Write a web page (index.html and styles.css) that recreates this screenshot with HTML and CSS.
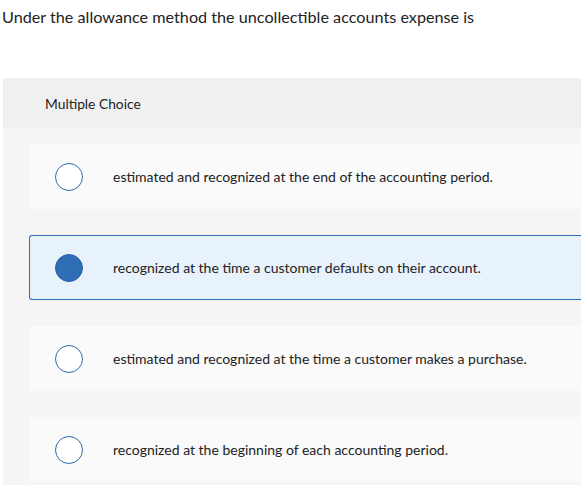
FILE: index.html
```html
<!DOCTYPE html>
<html>
<head>
<meta charset="utf-8">
<link rel="stylesheet" href="styles.css">
</head>
<body>
<p class="question">Under the allowance method the uncollectible accounts expense is</p>
<div class="quiz">
  <div class="quiz-header">Multiple Choice</div>
  <div class="choices">
    <div class="choice">
      <span class="radio"></span>
      <span class="label">estimated and recognized at the end of the accounting period.</span>
    </div>
    <div class="choice selected">
      <span class="radio"></span>
      <span class="label">recognized at the time a customer defaults on their account.</span>
    </div>
    <div class="choice">
      <span class="radio"></span>
      <span class="label">estimated and recognized at the time a customer makes a purchase.</span>
    </div>
    <div class="choice">
      <span class="radio"></span>
      <span class="label">recognized at the beginning of each accounting period.</span>
    </div>
  </div>
</div>
</body>
</html>
```
FILE: styles.css
```css
html, body {
  margin: 0;
  padding: 0;
  background: #ffffff;
}
body {
  font-family: "Lato", "Liberation Sans", sans-serif;
  color: #222222;
  width: 581px;
  height: 485px;
  overflow: hidden;
}
.question {
  margin: 0;
  padding: 8px 0 0 2px;
  font-size: 16.2px;
  line-height: 18px;
  height: 70px;
  box-sizing: border-box;
}
.quiz {
  margin: 8px 0 0 3px;
  background: #f5f5f5;
}
.quiz-header {
  background: #f0f0f0;
  height: 50px;
  display: flex;
  align-items: center;
  padding-left: 42px;
  font-size: 13.8px;
  color: #222;
}
.choices {
  display: flex;
  flex-direction: column;
  gap: 26px;
  padding: 16px 0 10px 26px;
}
.choice {
  height: 65px;
  box-sizing: border-box;
  background: #fafafa;
  border-radius: 3px 0 0 3px;
  display: flex;
  align-items: center;
  padding-left: 25px;
  border: 1px solid transparent;
  border-right: none;
}
.choice.selected {
  background: #e8f2fc;
  border-color: #2f6db5;
}
.radio {
  width: 26px;
  height: 26px;
  border: 1.5px solid #2f6aa8;
  border-radius: 50%;
  background: #ffffff;
  flex: none;
}
.selected .radio {
  background: #2f6db5;
  border-color: #2a62a3;
}
.label {
  margin-left: 30px;
  font-size: 14px;
  color: #222;
}
```
